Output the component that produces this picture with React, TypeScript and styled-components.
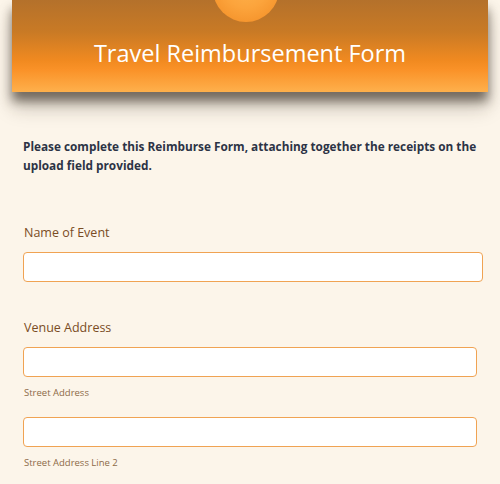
import styled, { createGlobalStyle } from "styled-components";

const GlobalStyle = createGlobalStyle`
  body {
    margin: 0;
    background: #fcf5ea;
    font-family: "Open Sans", "Noto Sans", sans-serif;
  }
`;

function App() {
  return (
    <>
      <GlobalStyle />
      <Page>
        <HeaderWrap>
          <Header>
            <Sun />
            <Title>Travel Reimbursement Form</Title>
          </Header>
        </HeaderWrap>
        <Content>
          <Intro>
            Please complete this Reimburse Form, attaching together the receipts on the upload field
            provided.
          </Intro>
          <Field $mt={48}>
            <Label>Name of Event</Label>
            <Input $width={460} />
          </Field>
          <Field $mt={36}>
            <Label>Venue Address</Label>
            <Input $width={454} />
            <SubLabel>Street Address</SubLabel>
            <Input $width={454} $mt={17} />
            <SubLabel>Street Address Line 2</SubLabel>
          </Field>
        </Content>
      </Page>
    </>
  );
}

export default App;

const Page = styled.div`
  width: 500px;
  min-height: 484px;
  overflow: hidden;
`;

const HeaderWrap = styled.div`
  padding: 0 12px;
`;

const Header = styled.header`
  position: relative;
  height: 92px;
  overflow: hidden;
  background: linear-gradient(
    to bottom,
    #b4712b 0%,
    #c97a25 35%,
    #f18a20 66%,
    #fa9228 76%,
    #feb04c 100%
  );
  box-shadow: 0 9px 10px rgba(40, 30, 20, 0.55), 0 16px 18px rgba(40, 30, 20, 0.22);
  display: flex;
  justify-content: center;
`;

const Sun = styled.div`
  position: absolute;
  left: 201px;
  top: -44px;
  width: 66px;
  height: 66px;
  border-radius: 50%;
  background: radial-gradient(circle at 50% 45%, #fdb24c 0%, #fca43c 45%, #f18a22 100%);
`;

const Title = styled.h1`
  margin: 38px 0 0;
  font-family: "Open Sans", "Noto Sans", sans-serif;
  font-weight: 400;
  font-size: 23.5px;
  line-height: 30px;
  color: #ffffff;
  position: relative;
`;

const Content = styled.main`
  padding: 45px 17px 0 23px;
`;

const Intro = styled.p`
  margin: 0 -6px 0 0;
  font-size: 11.8px;
  line-height: 19px;
  font-weight: 700;
  color: #2c3345;
`;

const Field = styled.div<{ $mt: number }>`
  margin-top: ${(p) => p.$mt}px;
  display: flex;
  flex-direction: column;
  align-items: flex-start;
`;

const Label = styled.label`
  font-size: 12.5px;
  line-height: 20px;
  color: #7a4c24;
  margin-bottom: 9px;
  padding-left: 1px;
`;

const Input = styled.input<{ $width: number; $mt?: number }>`
  box-sizing: border-box;
  width: ${(p) => p.$width}px;
  height: 30px;
  margin: ${(p) => p.$mt ?? 0}px 0 0;
  border: 1px solid #f0a353;
  border-radius: 4px;
  background: #ffffff;
  outline: none;
`;

const SubLabel = styled.span`
  font-size: 9.5px;
  line-height: 14px;
  color: #8d6a48;
  margin-top: 9px;
  padding-left: 1px;
`;
